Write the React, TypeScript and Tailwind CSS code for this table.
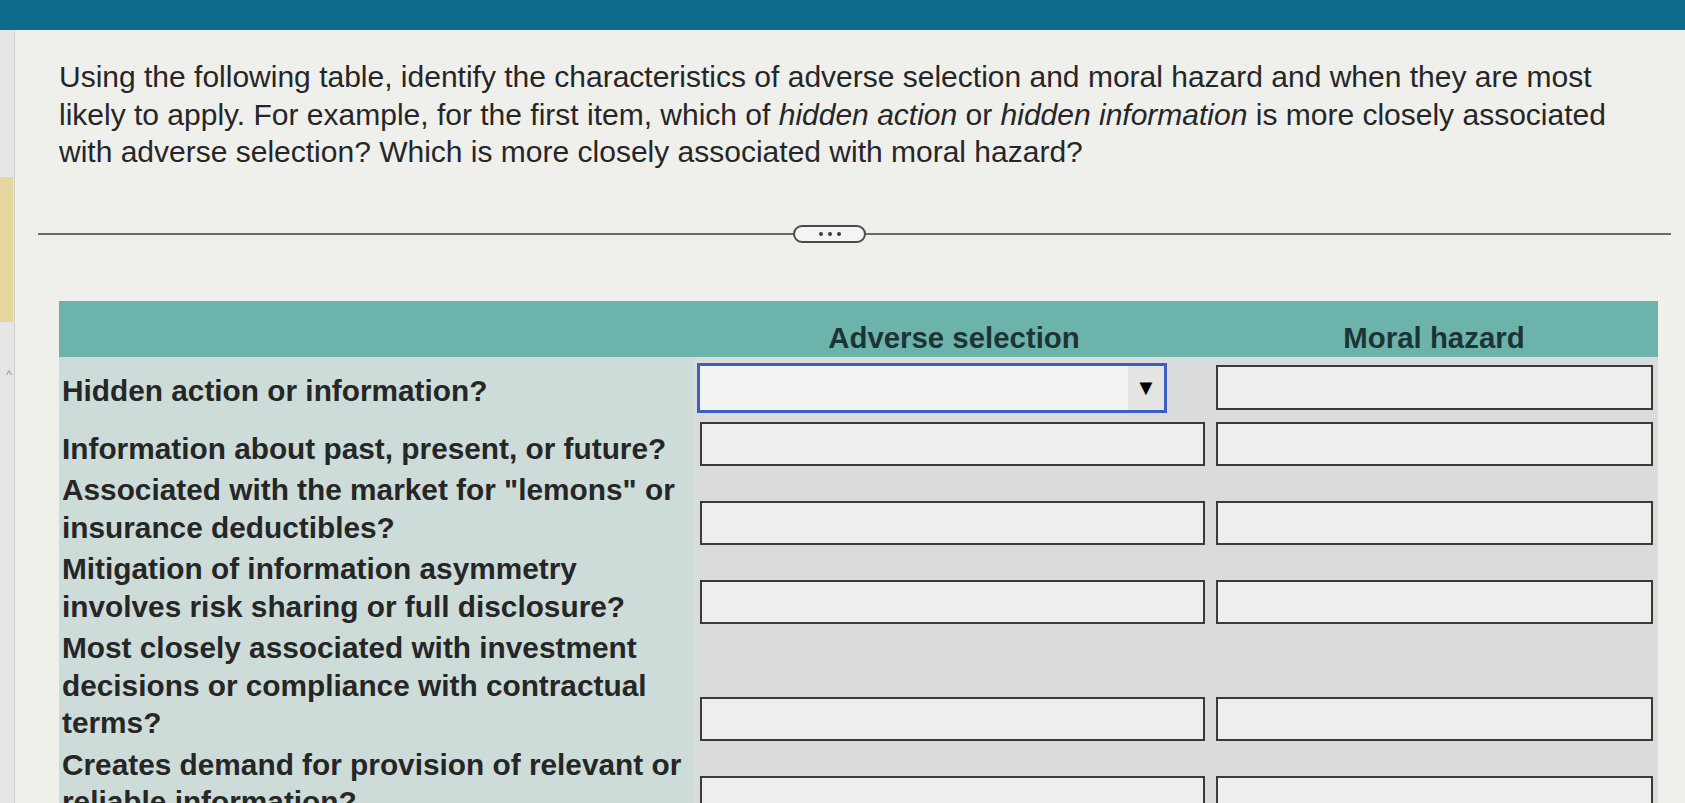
import React from "react";

type Row = {
  lines: string[];
};

const rows: Row[] = [
  { lines: ["Information about past, present, or future?"] },
  { lines: ['Associated with the market for "lemons" or', "insurance deductibles?"] },
  { lines: ["Mitigation of information asymmetry", "involves risk sharing or full disclosure?"] },
  {
    lines: [
      "Most closely associated with investment",
      "decisions or compliance with contractual",
      "terms?",
    ],
  },
  { lines: ["Creates demand for provision of relevant or", "reliable information?"] },
];

const AnswerBox: React.FC = () => (
  <div className="h-[44px] border-2 border-[#3a3a3a] bg-[#eeeeec]" />
);

const App: React.FC = () => {
  return (
    <div className="w-[1685px] h-[803px] overflow-hidden bg-[#efefec] font-['Liberation_Sans',Arial,sans-serif] text-[#262626]">
      {/* top bar */}
      <div className="h-[30px] bg-[#0f6b8b]" />

      <div className="flex">
        {/* left gutter */}
        <div className="w-[15px] shrink-0 border-r border-[#cfcfcd] bg-[#e6e6e4] flex flex-col h-[773px]">
          <div className="h-[147px]" />
          <div className="h-[145px] w-[13px] bg-[#e4d69c]" />
          <div className="mt-[46px] pl-[6px] text-[13px] leading-none text-[#999]">^</div>
        </div>

        <div className="flex-1">
          {/* question */}
          <div className="pl-[44px] pt-[28px] text-[30px] leading-[37.5px] whitespace-nowrap">
            <p>
              Using the following table, identify the characteristics of adverse selection and moral hazard and when they are most
            </p>
            <p>
              likely to apply. For example, for the first item, which of <i>hidden action</i> or <i>hidden information</i> is more closely associated
            </p>
            <p>with adverse selection? Which is more closely associated with moral hazard?</p>
          </div>

          {/* divider */}
          <div className="ml-[23px] w-[1633px] mt-[54px] flex items-center">
            <div className="w-[755px] h-[2px] bg-[#6a6a6a]" />
            <div className="w-[73px] h-[18px] rounded-full border-2 border-[#4a4a4a] bg-[#f4f4f2] flex items-center justify-center gap-[5px]">
              <span className="w-[4px] h-[4px] rounded-full bg-[#3a3a3a]" />
              <span className="w-[4px] h-[4px] rounded-full bg-[#3a3a3a]" />
              <span className="w-[4px] h-[4px] rounded-full bg-[#3a3a3a]" />
            </div>
            <div className="flex-1 h-[2px] bg-[#6a6a6a]" />
          </div>

          {/* table */}
          <div className="ml-[44px] mt-[58px] w-[1599px] font-bold">
            <div className="h-[56px] bg-[#6cb4ab] grid grid-cols-[634px_517px_448px] pt-[18px] text-[29.4px] leading-[37px] text-[#1d3435]">
              <div />
              <div className="text-center pl-[5px]">Adverse selection</div>
              <div className="text-center">Moral hazard</div>
            </div>

            <div className="grid grid-cols-[634px_517px_448px] text-[29.8px]">
              {/* row 1 */}
              <div className="bg-[#cddcd9] h-[71px] pl-[3px] pt-[15px] leading-[37.5px] whitespace-nowrap">
                Hidden action or information?
              </div>
              <div className="bg-[#d9dcda] pl-[4px] pt-[6px]">
                <div className="w-[470px] h-[50px] border-[3px] border-[#3d5ec2] bg-[#f3f3f1] flex justify-end">
                  <div className="w-[36px] bg-[#e4e4e2] flex items-center justify-center text-[22px] leading-none text-black">
                    ▼
                  </div>
                </div>
              </div>
              <div className="bg-[#d9dcda] pl-[6px] pr-[5px] pt-[8px]">
                <div className="h-[45px] border-2 border-[#3a3a3a] bg-[#eeeeec]" />
              </div>

              {rows.map((row, i) => (
                <React.Fragment key={i}>
                  <div className="bg-[#cddcd9] pl-[3px] py-[2px] leading-[37.5px] whitespace-nowrap">
                    {row.lines.map((line, j) => (
                      <div key={j}>{line}</div>
                    ))}
                  </div>
                  <div className="bg-[#d9dcda] pl-[7px] pr-[5px] py-[2px] flex flex-col justify-end">
                    <div className="mb-[1px] -mt-[10px]">
                      <AnswerBox />
                    </div>
                  </div>
                  <div className="bg-[#d9dcda] pl-[6px] pr-[5px] py-[2px] flex flex-col justify-end">
                    <div className="mb-[1px] -mt-[10px]">
                      <AnswerBox />
                    </div>
                  </div>
                </React.Fragment>
              ))}
            </div>
          </div>
        </div>
      </div>
    </div>
  );
};

export default App;
